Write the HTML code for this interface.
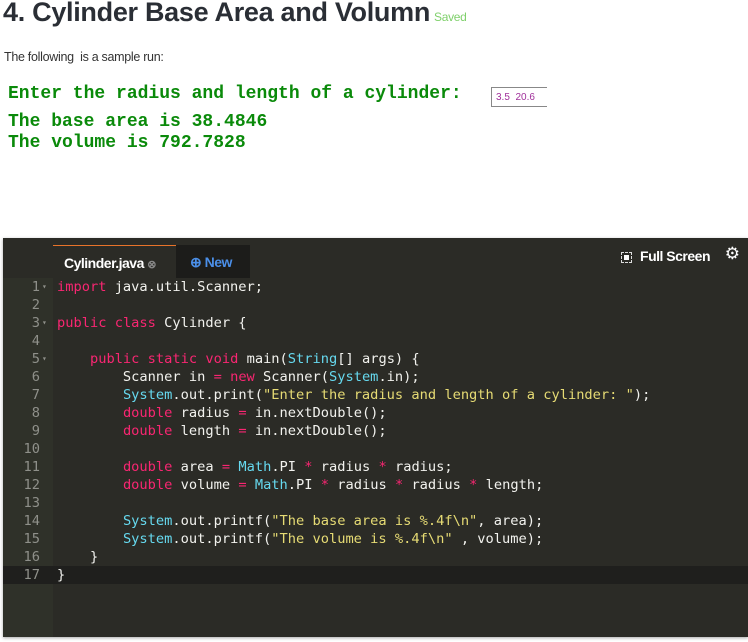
<!DOCTYPE html>
<html><head><meta charset="utf-8"><style>
body{margin:0;width:748px;height:642px;background:#fff;position:relative;overflow:hidden;font-family:"Liberation Sans",sans-serif}
h1{position:absolute;left:3px;top:-3px;margin:0;font-size:27px;font-weight:bold;color:#2a2e35;letter-spacing:-0.3px;white-space:nowrap}
h1 span{font-size:12px;color:#7fd06b;font-weight:normal;margin-left:4px}
.p{position:absolute;left:4px;top:50px;font-size:12.5px;color:#333;letter-spacing:-0.3px}
.out{position:absolute;left:8px;font-family:"Liberation Mono",monospace;font-weight:bold;font-size:18px;color:#0a8a0a;white-space:pre}
.inp{position:absolute;left:491px;top:87px;width:56px;height:20px;border:1px solid #888;border-right:none;font-size:10px;color:#a0309a;line-height:20px;padding-left:4px;box-sizing:border-box}
.ed{position:absolute;left:3px;top:238px;width:745px;height:399px;background:#2b2b26;box-shadow:0 1px 3px #aaa}
.gut{position:absolute;left:0;top:40px;width:50px;bottom:0;background:#2f3129}
.tab{position:absolute;top:7px;height:33px;line-height:35px;font-size:14px;font-weight:bold;letter-spacing:-0.5px}
.t1{left:50px;width:123px;background:#2b2b26;border-top:1px solid #e8732a;color:#fff;text-indent:11px}
.t2{left:173px;width:74px;background:#1c1c1a;color:#4b8fe8;text-indent:14px}
.code{position:absolute;left:0;top:40px;right:0;font-family:"DejaVu Sans Mono","Liberation Mono",monospace;font-size:13.7px;line-height:18px;color:#f2f2ee}
.ln{position:relative;height:18px}
.ln .n{position:absolute;left:0;width:37px;text-align:right;color:#8f908a}
.ln .f{position:absolute;left:39px;color:#8f908a;font-size:8px}
.ln .c{position:absolute;left:54px;white-space:pre}
.act{background:#1f1f1d}
.k{color:#f92672}.t{color:#66d9ef}.s{color:#e6db74}
.fs{position:absolute;right:38px;top:10px;color:#fff;font-size:14px;font-weight:bold;letter-spacing:-0.5px}
</style></head><body>
<h1>4. Cylinder Base Area and Volumn<span>Saved</span></h1>
<div class="p">The following&nbsp; is a sample run:</div>
<div class="out" style="top:84px">Enter the radius and length of a cylinder:</div>
<div class="inp">3.5&nbsp; 20.6</div>
<div class="out" style="top:112px">The base area is 38.4846</div>
<div class="out" style="top:133px">The volume is 792.7828</div>
<div class="ed">
<div class="gut"></div>
<div class="tab t1">Cylinder.java <span style="color:#888;font-size:11px">⊗</span></div>
<div class="tab t2">⊕ New</div>
<div style="position:absolute;left:618px;top:14px;width:9px;height:9px;border:1px dashed #ddd"><div style="margin:2px;width:5px;height:5px;background:#fff"></div></div>
<div class="fs">Full Screen</div>
<div style="position:absolute;right:8px;top:6px;color:#fff;font-size:17px">⚙</div>
<div class="code"><div class="ln"><span class="n">1</span><span class="f">▾</span><span class="c"><span class="k">import</span> java.util.Scanner;</span></div><div class="ln"><span class="n">2</span></div><div class="ln"><span class="n">3</span><span class="f">▾</span><span class="c"><span class="k">public</span> <span class="k">class</span> Cylinder {</span></div><div class="ln"><span class="n">4</span></div><div class="ln"><span class="n">5</span><span class="f">▾</span><span class="c">    <span class="k">public</span> <span class="k">static</span> <span class="k">void</span> main(<span class="t">String</span>[] args) {</span></div><div class="ln"><span class="n">6</span><span class="c">        Scanner in <span class="k">=</span> <span class="k">new</span> Scanner(<span class="t">System</span>.in);</span></div><div class="ln"><span class="n">7</span><span class="c">        <span class="t">System</span>.out.print(<span class="s">"Enter the radius and length of a cylinder: "</span>);</span></div><div class="ln"><span class="n">8</span><span class="c">        <span class="k">double</span> radius <span class="k">=</span> in.nextDouble();</span></div><div class="ln"><span class="n">9</span><span class="c">        <span class="k">double</span> length <span class="k">=</span> in.nextDouble();</span></div><div class="ln"><span class="n">10</span></div><div class="ln"><span class="n">11</span><span class="c">        <span class="k">double</span> area <span class="k">=</span> <span class="t">Math</span>.PI <span class="k">*</span> radius <span class="k">*</span> radius;</span></div><div class="ln"><span class="n">12</span><span class="c">        <span class="k">double</span> volume <span class="k">=</span> <span class="t">Math</span>.PI <span class="k">*</span> radius <span class="k">*</span> radius <span class="k">*</span> length;</span></div><div class="ln"><span class="n">13</span></div><div class="ln"><span class="n">14</span><span class="c">        <span class="t">System</span>.out.printf(<span class="s">"The base area is %.4f\n"</span>, area);</span></div><div class="ln"><span class="n">15</span><span class="c">        <span class="t">System</span>.out.printf(<span class="s">"The volume is %.4f\n"</span> , volume);</span></div><div class="ln"><span class="n">16</span><span class="c">    }</span></div><div class="ln act"><span class="n">17</span><span class="c">}</span></div></div>
</div>
</body></html>
